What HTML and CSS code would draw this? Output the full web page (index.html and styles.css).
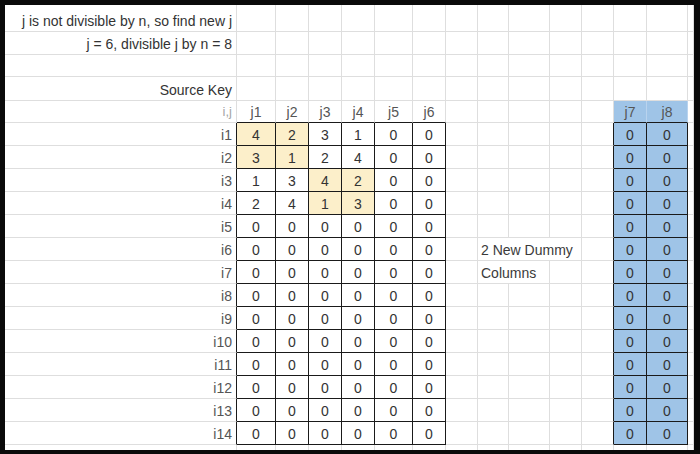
FILE: index.html
```html
<!DOCTYPE html>
<html>
<head>
<meta charset="utf-8">
<link rel="stylesheet" href="styles.css">
</head>
<body>
<div class="frame">
<table class="sheet">
<colgroup>
<col class="w232"><col class="w39"><col class="w33"><col class="w33"><col class="w33"><col class="w38"><col class="w33"><col class="w32"><col class="w31"><col class="w41"><col class="w32"><col class="w32"><col class="w33"><col class="w41"><col class="w6">
</colgroup>
<tr class="h27"><td class="r">j is not divisible by n, so find new j</td><td></td><td></td><td></td><td></td><td></td><td></td><td></td><td></td><td></td><td></td><td></td><td></td><td></td><td></td></tr>
<tr class="h23"><td class="r">j = 6, divisible j by n = 8</td><td></td><td></td><td></td><td></td><td></td><td></td><td></td><td></td><td></td><td></td><td></td><td></td><td></td><td></td></tr>
<tr class="h22"><td></td><td></td><td></td><td></td><td></td><td></td><td></td><td></td><td></td><td></td><td></td><td></td><td></td><td></td><td></td></tr>
<tr class="h24"><td class="r">Source Key</td><td></td><td></td><td></td><td></td><td></td><td></td><td></td><td></td><td></td><td></td><td></td><td></td><td></td><td></td></tr>
<tr class="h22"><td class="ij">i,j</td><td class="hd">j1</td><td class="hd">j2</td><td class="hd">j3</td><td class="hd">j4</td><td class="hd">j5</td><td class="hd">j6</td><td></td><td></td><td></td><td></td><td></td><td class="hd b">j7</td><td class="hd b">j8</td><td></td></tr>
<tr class="h23"><td class="lbl">i1</td><td class="k y">4</td><td class="k y">2</td><td class="k">3</td><td class="k">1</td><td class="k">0</td><td class="k">0</td><td></td><td></td><td></td><td></td><td class="pre"></td><td class="k b">0</td><td class="k b">0</td><td></td></tr>
<tr class="h23"><td class="lbl">i2</td><td class="k y">3</td><td class="k y">1</td><td class="k">2</td><td class="k">4</td><td class="k">0</td><td class="k">0</td><td></td><td></td><td></td><td></td><td class="pre"></td><td class="k b">0</td><td class="k b">0</td><td></td></tr>
<tr class="h23"><td class="lbl">i3</td><td class="k">1</td><td class="k">3</td><td class="k y">4</td><td class="k y">2</td><td class="k">0</td><td class="k">0</td><td></td><td></td><td></td><td></td><td class="pre"></td><td class="k b">0</td><td class="k b">0</td><td></td></tr>
<tr class="h23"><td class="lbl">i4</td><td class="k">2</td><td class="k">4</td><td class="k y">1</td><td class="k y">3</td><td class="k">0</td><td class="k">0</td><td></td><td></td><td></td><td></td><td class="pre"></td><td class="k b">0</td><td class="k b">0</td><td></td></tr>
<tr class="h23"><td class="lbl">i5</td><td class="k">0</td><td class="k">0</td><td class="k">0</td><td class="k">0</td><td class="k">0</td><td class="k">0</td><td></td><td></td><td></td><td></td><td class="pre"></td><td class="k b">0</td><td class="k b">0</td><td></td></tr>
<tr class="h23"><td class="lbl">i6</td><td class="k">0</td><td class="k">0</td><td class="k">0</td><td class="k">0</td><td class="k">0</td><td class="k">0</td><td></td><td class="note" colspan="3">2 New Dummy</td><td class="pre"></td><td class="k b">0</td><td class="k b">0</td><td></td></tr>
<tr class="h23"><td class="lbl">i7</td><td class="k">0</td><td class="k">0</td><td class="k">0</td><td class="k">0</td><td class="k">0</td><td class="k">0</td><td></td><td class="note" colspan="2">Columns</td><td></td><td class="pre"></td><td class="k b">0</td><td class="k b">0</td><td></td></tr>
<tr class="h23"><td class="lbl">i8</td><td class="k">0</td><td class="k">0</td><td class="k">0</td><td class="k">0</td><td class="k">0</td><td class="k">0</td><td></td><td></td><td></td><td></td><td class="pre"></td><td class="k b">0</td><td class="k b">0</td><td></td></tr>
<tr class="h23"><td class="lbl">i9</td><td class="k">0</td><td class="k">0</td><td class="k">0</td><td class="k">0</td><td class="k">0</td><td class="k">0</td><td></td><td></td><td></td><td></td><td class="pre"></td><td class="k b">0</td><td class="k b">0</td><td></td></tr>
<tr class="h23"><td class="lbl">i10</td><td class="k">0</td><td class="k">0</td><td class="k">0</td><td class="k">0</td><td class="k">0</td><td class="k">0</td><td></td><td></td><td></td><td></td><td class="pre"></td><td class="k b">0</td><td class="k b">0</td><td></td></tr>
<tr class="h23"><td class="lbl">i11</td><td class="k">0</td><td class="k">0</td><td class="k">0</td><td class="k">0</td><td class="k">0</td><td class="k">0</td><td></td><td></td><td></td><td></td><td class="pre"></td><td class="k b">0</td><td class="k b">0</td><td></td></tr>
<tr class="h23"><td class="lbl">i12</td><td class="k">0</td><td class="k">0</td><td class="k">0</td><td class="k">0</td><td class="k">0</td><td class="k">0</td><td></td><td></td><td></td><td></td><td class="pre"></td><td class="k b">0</td><td class="k b">0</td><td></td></tr>
<tr class="h23"><td class="lbl">i13</td><td class="k">0</td><td class="k">0</td><td class="k">0</td><td class="k">0</td><td class="k">0</td><td class="k">0</td><td></td><td></td><td></td><td></td><td class="pre"></td><td class="k b">0</td><td class="k b">0</td><td></td></tr>
<tr class="h23"><td class="lbl">i14</td><td class="k">0</td><td class="k">0</td><td class="k">0</td><td class="k">0</td><td class="k">0</td><td class="k">0</td><td></td><td></td><td></td><td></td><td class="pre"></td><td class="k b">0</td><td class="k b">0</td><td></td></tr>
<tr class="tail"><td></td><td></td><td></td><td></td><td></td><td></td><td></td><td></td><td></td><td></td><td></td><td></td><td></td><td></td><td></td></tr>
</table>
</div>
</body>
</html>
```

FILE: styles.css
```css
html, body {
  margin: 0;
  padding: 0;
  background: #ffffff;
}

.frame {
  width: 700px;
  height: 454px;
  box-sizing: border-box;
  border-style: solid;
  border-color: #0a0a0a;
  border-width: 5px 6px 4px 5px;
  background: #ffffff;
  overflow: hidden;
}

.sheet {
  border-collapse: separate;
  border-spacing: 0;
  table-layout: fixed;
  width: 689px;
  font-family: "Liberation Sans", Arial, sans-serif;
  font-size: 14px;
  color: #333333;
}

.w232 { width: 232px; }
.w39 { width: 39px; }
.w38 { width: 38px; }
.w41 { width: 41px; }
.w33 { width: 33px; }
.w32 { width: 32px; }
.w31 { width: 31px; }
.w6 { width: 6px; }

.h27 { height: 27px; }
.h24 { height: 24px; }
.h23 { height: 23px; }
.h22 { height: 22px; }
.tail { height: 5px; }

.sheet td {
  box-sizing: border-box;
  padding: 0 4px 2px 3px;
  border-right: 1px solid #dedede;
  border-bottom: 1px solid #dedede;
  vertical-align: bottom;
  white-space: nowrap;
  overflow: visible;
  line-height: 16px;
}

.tail td {
  border-bottom: none;
  padding: 0;
  line-height: 0;
}

.r { text-align: right; }

.sheet .ij {
  text-align: right;
  color: #a5a5a5;
  font-size: 13px;
}

.sheet .hd {
  text-align: center;
  color: #555555;
  border-bottom-color: #1a1a1a;
  padding: 0 0 2px;
}

.sheet .lbl {
  text-align: right;
  color: #555555;
  border-right-color: #1a1a1a;
}

.sheet .k {
  text-align: center;
  padding: 0 0 2px;
  border-right-color: #1a1a1a;
  border-bottom-color: #1a1a1a;
}

.sheet .pre {
  border-right-color: #1a1a1a;
}

.sheet .hd.b {
  border-right-color: #b9d3ee;
}

.y { background: #fcefca; }
.b { background: #9fc4e7; }

.note {
  color: #3a3a3a;
}
```
